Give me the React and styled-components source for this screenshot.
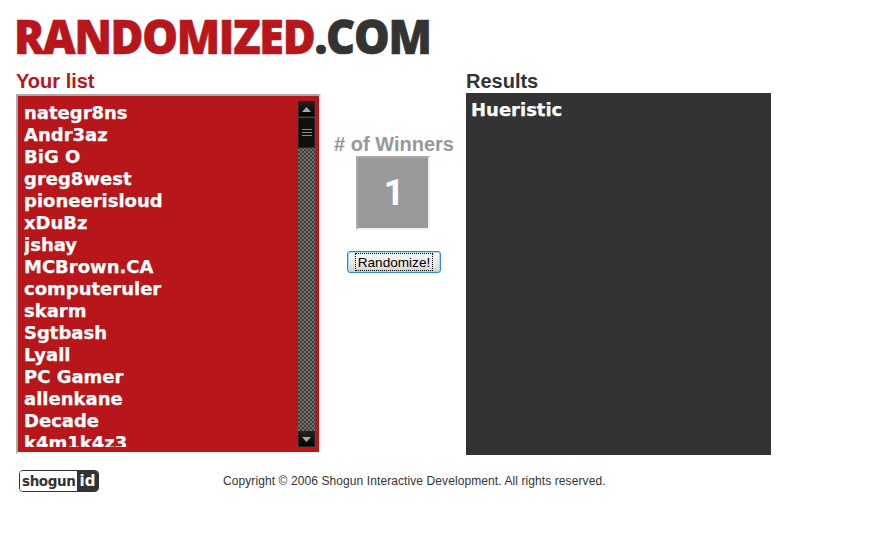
import React from 'react';
import styled, { createGlobalStyle } from 'styled-components';

const names = [
    'nategr8ns', 'Andr3az', 'BiG O', 'greg8west', 'pioneerisloud', 'xDuBz', 'jshay', 'MCBrown.CA',
    'computeruler', 'skarm', 'Sgtbash', 'Lyall', 'PC Gamer', 'allenkane', 'Decade', 'k4m1k4z3',
];

const GlobalStyle = createGlobalStyle`
    html, body {
        margin: 0;
        padding: 0;
        background: #fff;
        font-family: "Liberation Sans", Arial, sans-serif;
    }
`;

const Page = styled.div`
    width: 895px;
    height: 539px;
    padding: 11px 0 0 16px;
    box-sizing: border-box;
    overflow: hidden;
`;

const Logo = styled.h1`
    margin: 0 0 0 -2px;
    height: 52px;
    font: 800 47.5px/50px "Open Sans", sans-serif;
    letter-spacing: -1.35px;
    white-space: nowrap;
    color: #b7161b;
    -webkit-text-stroke: 0.7px #b7161b;
    transform: scaleX(0.945);
    transform-origin: left center;
    span {
        color: #333;
        -webkit-text-stroke: 0.7px #333;
    }
`;

const Columns = styled.div`
    display: grid;
    grid-template-columns: 305px 145px 305px;
    margin-top: 6px;
`;

const Heading = styled.h2`
    margin: 0;
    height: 24px;
    font: bold 20px/24px "Liberation Sans", Arial, sans-serif;
    color: ${props => props.color};
`;

const ListBox = styled.div`
    position: relative;
    height: 360px;
    box-sizing: border-box;
    background: #b7161b;
    border-style: solid;
    border-width: 2px;
    border-color: #aaa #f2f2f2 #f2f2f2 #aaa;
    padding: 6px 0 0 6px;
    margin-top: 1px;
`;

const ListText = styled.div`
    height: 345px;
    overflow: hidden;
`;

const Name = styled.div`
    font: bold 18px/22px "DejaVu Sans", Verdana, sans-serif;
    -webkit-text-stroke: 0.25px #fff;
    color: #fff;
    white-space: nowrap;
`;

const Scrollbar = styled.div`
    position: absolute;
    top: 5px;
    right: 4px;
    bottom: 5px;
    width: 17px;
    display: flex;
    flex-direction: column;
    background: repeating-conic-gradient(#404040 0 25%, #6e6e6e 0 50%) 0 0 / 4px 4px;
`;

const ScrollButton = styled.div`
    height: 16px;
    box-sizing: border-box;
    background: linear-gradient(#222, #000);
    border: 1px solid #262626;
    display: flex;
    align-items: center;
    justify-content: center;
`;

const Thumb = styled.div`
    height: 31px;
    box-sizing: border-box;
    background: #111;
    border: 1px solid #262626;
    border-top-color: #444;
    display: flex;
    flex-direction: column;
    align-items: center;
    justify-content: center;
    gap: 2px;
    i {
        display: block;
        width: 10px;
        height: 1px;
        background: #888;
    }
`;

const Spacer = styled.div`
    flex: 1;
`;

const Center = styled.div`
    display: flex;
    flex-direction: column;
    align-items: center;
    padding-top: 63px;
    width: 140px;
`;

const WinnersLabel = styled.div`
    font: bold 20px/24px "Liberation Sans", Arial, sans-serif;
    color: #999;
    white-space: nowrap;
    margin-left: 6px;
`;

const WinnersBox = styled.div`
    width: 74px;
    height: 74px;
    margin: 0 0 0 4px;
    padding-left: 2px;
    box-sizing: border-box;
    background: #999;
    border-style: solid;
    border-width: 2px;
    border-color: #aaa #f2f2f2 #f2f2f2 #aaa;
    color: #fff;
    font: 700 36px/70px Roboto, "Liberation Sans", sans-serif;
    text-align: center;
`;

const RandomizeButton = styled.button`
    width: 94px;
    height: 22px;
    margin: 21px 0 0 6px;
    padding: 0;
    position: relative;
    box-sizing: border-box;
    border: 1px solid #2f8fc4;
    border-radius: 3px;
    background: linear-gradient(#fafafa, #e6e6e0 70%, #cfcfc8);
    box-shadow: inset 0 0 0 1px #a9d6ef;
    color: #000;
    font: 13.6px "Liberation Sans", Arial, sans-serif;
    &::after {
        content: '';
        position: absolute;
        inset: 1px 7px;
        border: 1px dotted #000;
    }
`;

const ResultsBox = styled.div`
    height: 362px;
    background: #333;
    padding: 6px 5px;
    box-sizing: border-box;
`;

const Footer = styled.div`
    display: flex;
    align-items: center;
    margin-top: 15px;
    padding-left: 3px;
    height: 22px;
`;

const ShogunBadge = styled.div`
    display: flex;
    width: 80px;
    height: 22px;
    box-sizing: border-box;
    border: 1px solid #333;
    border-radius: 4px;
    overflow: hidden;
    font: bold 13.5px/20px "DejaVu Sans", sans-serif;
`;

const BadgeLeft = styled.span`
    flex: 1;
    color: #333;
    background: #fff;
    padding-left: 2px;
    letter-spacing: -0.4px;
`;

const BadgeRight = styled.span`
    width: 21px;
    background: #333;
    color: #fff;
    font-size: 15px;
    text-align: center;
`;

const Copyright = styled.div`
    margin-left: 124px;
    font: 12px/14px "Liberation Sans", Arial, sans-serif;
    letter-spacing: 0.09px;
    color: #333;
    white-space: nowrap;
`;

const App = () => {
    return (
        <>
            <GlobalStyle />
            <Page>
                <Logo>RANDOMIZED<span>.COM</span></Logo>
                <Columns>
                    <div>
                        <Heading color="#b7161b">Your list</Heading>
                        <ListBox>
                            <ListText>
                                {names.map(name => <Name key={name}>{name}</Name>)}
                            </ListText>
                            <Scrollbar>
                                <ScrollButton>
                                    <svg width="9" height="5" viewBox="0 0 9 5"><path d="M4.5 0L9 5H0z" fill="#aaa" /></svg>
                                </ScrollButton>
                                <Thumb><i /><i /><i /></Thumb>
                                <Spacer />
                                <ScrollButton>
                                    <svg width="9" height="5" viewBox="0 0 9 5"><path d="M0 0h9L4.5 5z" fill="#aaa" /></svg>
                                </ScrollButton>
                            </Scrollbar>
                        </ListBox>
                    </div>
                    <Center>
                        <WinnersLabel># of Winners</WinnersLabel>
                        <WinnersBox>1</WinnersBox>
                        <RandomizeButton>Randomize!</RandomizeButton>
                    </Center>
                    <div>
                        <Heading color="#333">Results</Heading>
                        <ResultsBox><Name>Hueristic</Name></ResultsBox>
                    </div>
                </Columns>
                <Footer>
                    <ShogunBadge>
                        <BadgeLeft>shogun</BadgeLeft>
                        <BadgeRight>id</BadgeRight>
                    </ShogunBadge>
                    <Copyright>Copyright © 2006 Shogun Interactive Development. All rights reserved.</Copyright>
                </Footer>
            </Page>
        </>
    );
};

export default App;
